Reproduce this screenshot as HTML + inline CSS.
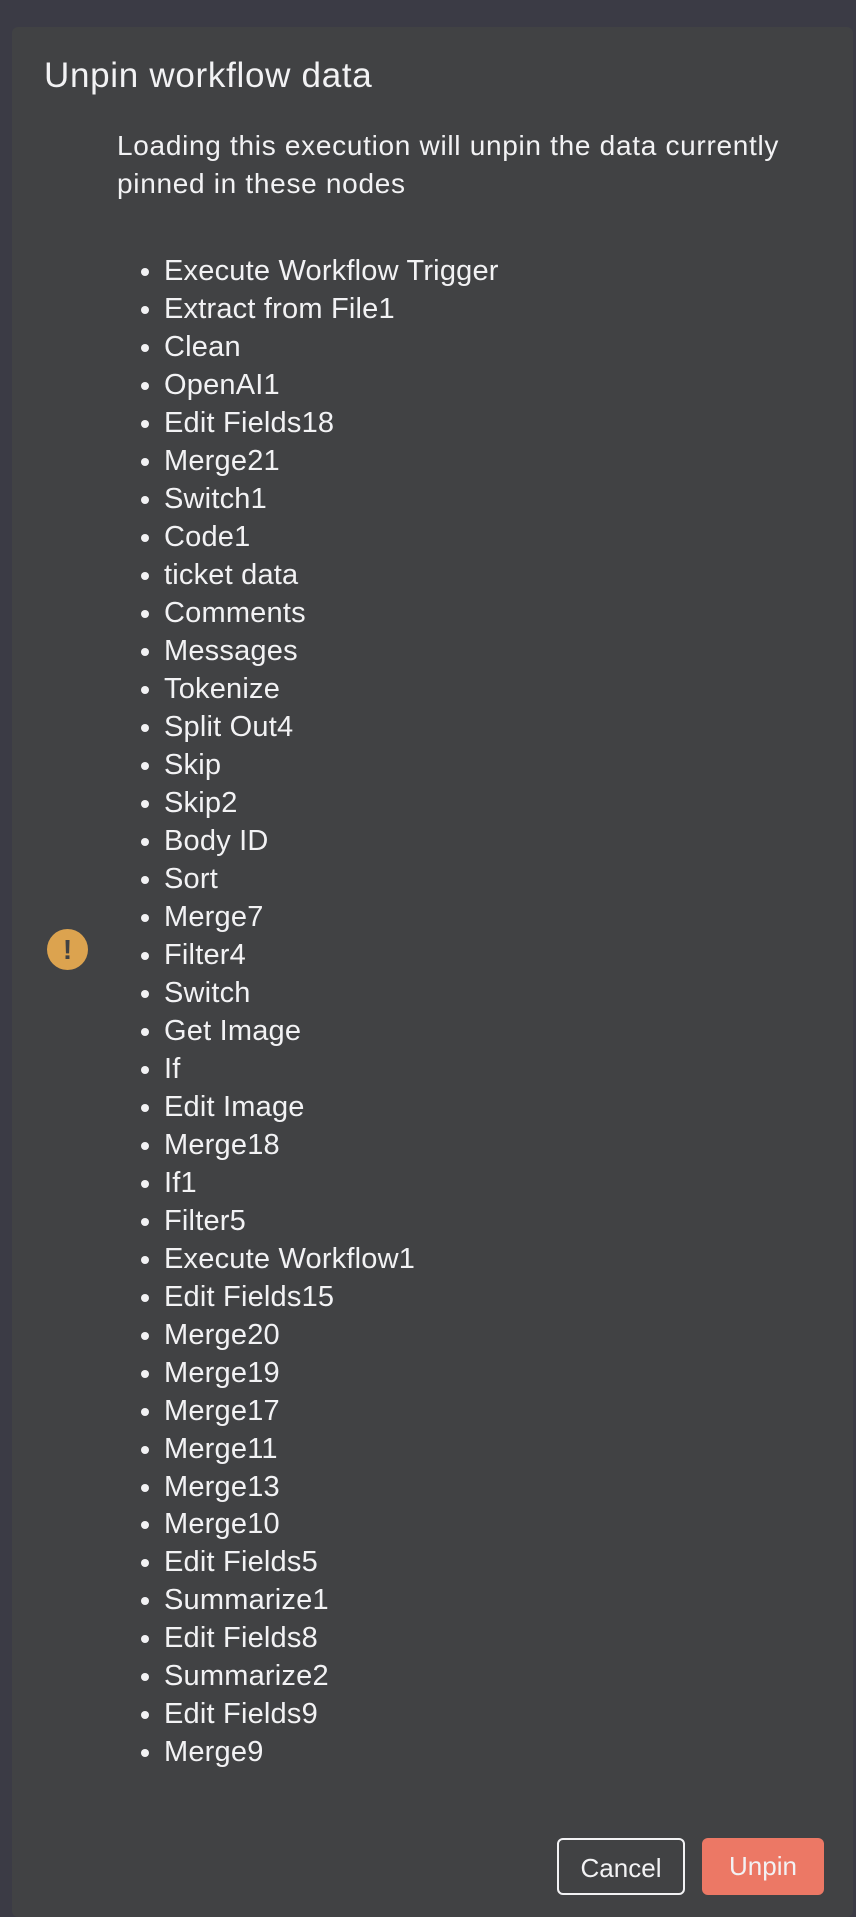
<!DOCTYPE html>
<html><head><style>
html,body{margin:0;padding:0;width:856px;height:1906px;overflow:hidden;background:#3b3b45;font-family:"Liberation Sans",sans-serif;}
.modal{position:absolute;left:12px;top:27px;width:841px;height:1890px;background:#414244;border-radius:6px;color:#f2f2f4;}
.title{position:absolute;left:32px;top:29px;font-size:35px;letter-spacing:0.7px;}
.desc{position:absolute;left:105px;top:100px;width:730px;font-size:28px;line-height:38px;letter-spacing:0.7px;white-space:nowrap;}
ul{position:absolute;left:105px;top:226px;margin:0;padding:0 0 0 47px;font-size:29px;line-height:37.98px;letter-spacing:0.2px;}
.icon{position:absolute;left:35px;top:902px;width:41px;height:41px;border-radius:50%;background:#dca34f;color:#414244;font-weight:bold;font-size:28px;text-align:center;line-height:41px;}
.btn{position:absolute;top:1811px;height:57px;border-radius:6px;font-size:26px;line-height:57px;text-align:center;box-sizing:border-box;}
.cancel{left:545px;width:128px;border:2px solid #f2f2f4;}
.unpin{left:690px;width:122px;background:#ec7865;}
</style></head><body>
<div class="modal">
<div class="title">Unpin workflow data</div>
<div class="desc">Loading this execution will unpin the data currently<br>pinned in these nodes</div>
<div class="icon">!</div>
<ul>
<li>Execute Workflow Trigger</li><li>Extract from File1</li><li>Clean</li><li>OpenAI1</li><li>Edit Fields18</li><li>Merge21</li><li>Switch1</li><li>Code1</li><li>ticket data</li><li>Comments</li><li>Messages</li><li>Tokenize</li><li>Split Out4</li><li>Skip</li><li>Skip2</li><li>Body ID</li><li>Sort</li><li>Merge7</li><li>Filter4</li><li>Switch</li><li>Get Image</li><li>If</li><li>Edit Image</li><li>Merge18</li><li>If1</li><li>Filter5</li><li>Execute Workflow1</li><li>Edit Fields15</li><li>Merge20</li><li>Merge19</li><li>Merge17</li><li>Merge11</li><li>Merge13</li><li>Merge10</li><li>Edit Fields5</li><li>Summarize1</li><li>Edit Fields8</li><li>Summarize2</li><li>Edit Fields9</li><li>Merge9</li>
</ul>
<div class="btn cancel">Cancel</div>
<div class="btn unpin">Unpin</div>
</div>
</body></html>
